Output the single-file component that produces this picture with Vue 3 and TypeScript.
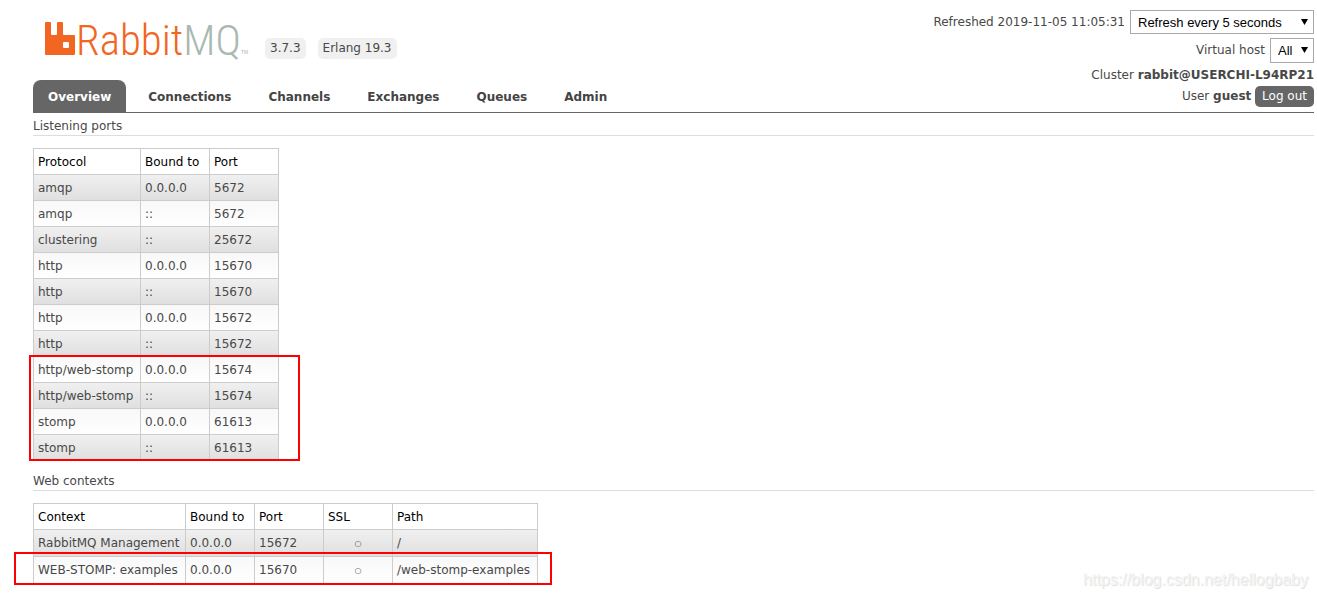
<script setup lang="ts">
import { ref } from 'vue'

interface Listener {
  protocol: string
  bound: string
  port: number
}

interface WebContext {
  context: string
  bound: string
  port: number
  path: string
}

const tabs: string[] = ['Overview', 'Connections', 'Channels', 'Exchanges', 'Queues', 'Admin']
const activeTab = ref('Overview')
const interval = ref('Refresh every 5 seconds')
const vhost = ref('All')

const listeners: Listener[] = [
  { protocol: 'amqp', bound: '0.0.0.0', port: 5672 },
  { protocol: 'amqp', bound: '::', port: 5672 },
  { protocol: 'clustering', bound: '::', port: 25672 },
  { protocol: 'http', bound: '0.0.0.0', port: 15670 },
  { protocol: 'http', bound: '::', port: 15670 },
  { protocol: 'http', bound: '0.0.0.0', port: 15672 },
  { protocol: 'http', bound: '::', port: 15672 },
  { protocol: 'http/web-stomp', bound: '0.0.0.0', port: 15674 },
  { protocol: 'http/web-stomp', bound: '::', port: 15674 },
  { protocol: 'stomp', bound: '0.0.0.0', port: 61613 },
  { protocol: 'stomp', bound: '::', port: 61613 },
]

const contexts: WebContext[] = [
  { context: 'RabbitMQ Management', bound: '0.0.0.0', port: 15672, path: '/' },
  { context: 'WEB-STOMP: examples', bound: '0.0.0.0', port: 15670, path: '/web-stomp-examples' },
]
</script>

<template>
  <div class="page">
    <header class="header">
      <div class="brand-side">
        <div class="brand">
          <a class="logo" href="#" aria-label="RabbitMQ">
            <svg width="206" height="60" viewBox="0 -12 206 60">
              <path
                class="mark"
                d="M1 3h4q1 0 1 1v11q0 1 1 1h4q1 0 1-1V4q0-1 1-1h4q1 0 1 1v11q0 1 1 1h10q1 0 1 1v18q0 1-1 1H1q-1 0-1-1V4q0-1 1-1ZM19 23q-1 0-1 1v4q0 1 1 1h4q1 0 1-1v-4q0-1-1-1Z"
                fill-rule="evenodd"
              />
              <text class="word" x="31" y="36"><tspan class="rabbit">Rabbit</tspan><tspan class="mq">MQ</tspan></text>
              <text class="tm" x="196" y="35">TM</text>
            </svg>
          </a>
          <span class="version">3.7.3</span>
          <span class="version">Erlang 19.3</span>
        </div>
        <nav class="tabs">
          <a
            v-for="tab in tabs"
            :key="tab"
            href="#"
            :class="['tab', { active: tab === activeTab }]"
            @click.prevent="activeTab = tab"
          >{{ tab }}</a>
        </nav>
      </div>

      <div class="status">
        <div class="status-row select-row">
          <label for="interval">Refreshed 2019-11-05 11:05:31</label>
          <span class="select-box">
            <select id="interval" v-model="interval">
              <option>Refresh every 5 seconds</option>
              <option>Refresh every 30 seconds</option>
              <option>Do not refresh</option>
            </select>
          </span>
        </div>
        <div class="status-row select-row">
          <label for="vhost">Virtual host</label>
          <span class="select-box">
            <select id="vhost" v-model="vhost">
              <option>All</option>
              <option>/</option>
            </select>
          </span>
        </div>
        <div class="status-row">Cluster <strong>rabbit@USERCHI-L94RP21</strong></div>
        <div class="status-row">User <strong>guest</strong> <button type="button" class="logout">Log out</button></div>
      </div>
    </header>

    <main>
      <section>
        <h2>Listening ports</h2>
        <div class="table-wrap">
          <table class="ports">
            <thead>
              <tr><th>Protocol</th><th>Bound to</th><th>Port</th></tr>
            </thead>
            <tbody>
              <tr v-for="(row, i) in listeners" :key="i">
                <td>{{ row.protocol }}</td>
                <td>{{ row.bound }}</td>
                <td>{{ row.port }}</td>
              </tr>
            </tbody>
          </table>
          <div class="highlight stomp-ports"></div>
        </div>
      </section>

      <section>
        <h2>Web contexts</h2>
        <div class="table-wrap">
          <table class="contexts">
            <thead>
              <tr><th>Context</th><th>Bound to</th><th>Port</th><th>SSL</th><th>Path</th></tr>
            </thead>
            <tbody>
              <tr v-for="row in contexts" :key="row.context">
                <td>{{ row.context }}</td>
                <td>{{ row.bound }}</td>
                <td>{{ row.port }}</td>
                <td class="center">○</td>
                <td>{{ row.path }}</td>
              </tr>
            </tbody>
          </table>
          <div class="highlight stomp-context"></div>
        </div>
      </section>
    </main>

    <div class="watermark">https://blog.csdn.net/hellogbaby</div>
  </div>
</template>

<style>
body {
  margin: 0;
  background: #fff;
}
</style>

<style scoped>
.page {
  position: relative;
  box-sizing: border-box;
  min-height: 100vh;
  padding: 0 3px 12px 33px;
  font: 12px/17px Verdana, "DejaVu Sans", sans-serif;
  color: #484848;
}

.header {
  display: flex;
  justify-content: space-between;
  border-bottom: 1px solid #666;
}

.brand-side {
  display: flex;
  flex-direction: column;
  justify-content: space-between;
  padding-top: 7px;
}

.brand {
  display: flex;
  align-items: flex-start;
  gap: 12px;
  padding-left: 12px;
}

.logo {
  margin-right: 2px;
}

.logo svg {
  display: block;
}

.mark,
.rabbit {
  fill: #f26522;
}

.mq,
.tm {
  fill: #a9b8b1;
}

.word {
  font: 300 43px "Roboto Condensed", Roboto, sans-serif;
}

.tm {
  font: 5px "Liberation Sans", sans-serif;
}

.version {
  flex: none;
  margin-top: 31px;
  padding: 2px 5px;
  border-radius: 5px;
  background: #f0f0f0;
}

.tabs {
  display: flex;
}

.tab {
  margin-right: 7px;
  padding: 9px 15px 6px;
  border-radius: 8px 8px 0 0;
  color: #444;
  font-weight: bold;
  text-decoration: none;
}

.tab.active {
  background: #666;
  color: #fff;
}

.status {
  display: flex;
  flex-direction: column;
  align-items: flex-end;
  gap: 4px;
  padding: 10px 0 7px;
}

.status-row {
  white-space: nowrap;
}

.select-row {
  display: flex;
  align-items: center;
  gap: 5px;
}

.select-box {
  position: relative;
}

.select-box::after {
  content: "";
  position: absolute;
  top: 9px;
  right: 6px;
  width: 7px;
  height: 6px;
  background: #000;
  clip-path: polygon(0 0, 100% 0, 50% 100%);
  pointer-events: none;
}

select {
  display: block;
  appearance: none;
  height: 24px;
  padding: 0 23px 0 7px;
  border: 1px solid #a9a9a9;
  border-radius: 0;
  background: #fff;
  color: #000;
  font: 13px "Liberation Sans", Arial, sans-serif;
}

#vhost {
  height: 25px;
  padding-right: 20px;
}

.logout {
  margin: -2px 0;
  padding: 2px 7px;
  border: 0;
  border-radius: 5px;
  background: #666;
  color: #fff;
  font: inherit;
}

h2 {
  margin: 0 0 12px;
  padding: 5px 0 0;
  border-bottom: 1px solid #ddd;
  font: inherit;
}

section + section {
  margin-top: 7px;
}

.table-wrap {
  position: relative;
  width: fit-content;
}

table {
  border-collapse: collapse;
}

th,
td {
  box-sizing: border-box;
  min-width: 69px;
  height: 26px;
  padding: 5px 4px 3px;
  border: 1px solid #ccc;
  text-align: left;
  white-space: nowrap;
}

th {
  color: #000;
  font-weight: normal;
}

.ports th:first-child {
  min-width: 107px;
}

.contexts th:first-child {
  min-width: 152px;
}

.contexts th:last-child {
  min-width: 145px;
}

tbody tr:nth-child(odd) {
  background: linear-gradient(#f0f0f0, #dfdfdf);
}

tbody tr:nth-child(even) {
  background: linear-gradient(#f8f8f8, #fff);
}

.contexts td {
  height: 27px;
  padding: 4px;
}

.contexts .center {
  text-align: center;
  font-size: 8px;
}

.highlight {
  position: absolute;
  box-sizing: border-box;
  border: 2px solid #f00;
  pointer-events: none;
}

.stomp-ports {
  left: -4px;
  right: -21px;
  bottom: 0;
  height: 106px;
}

.stomp-context {
  left: -19px;
  right: -14px;
  bottom: -1px;
  height: 33px;
}

.watermark {
  position: absolute;
  right: 9px;
  bottom: 8px;
  color: #f4f4f4;
  font: 16px/20px "Liberation Sans", Arial, sans-serif;
  text-shadow: 1px 1px 1px #ddd;
}
</style>
